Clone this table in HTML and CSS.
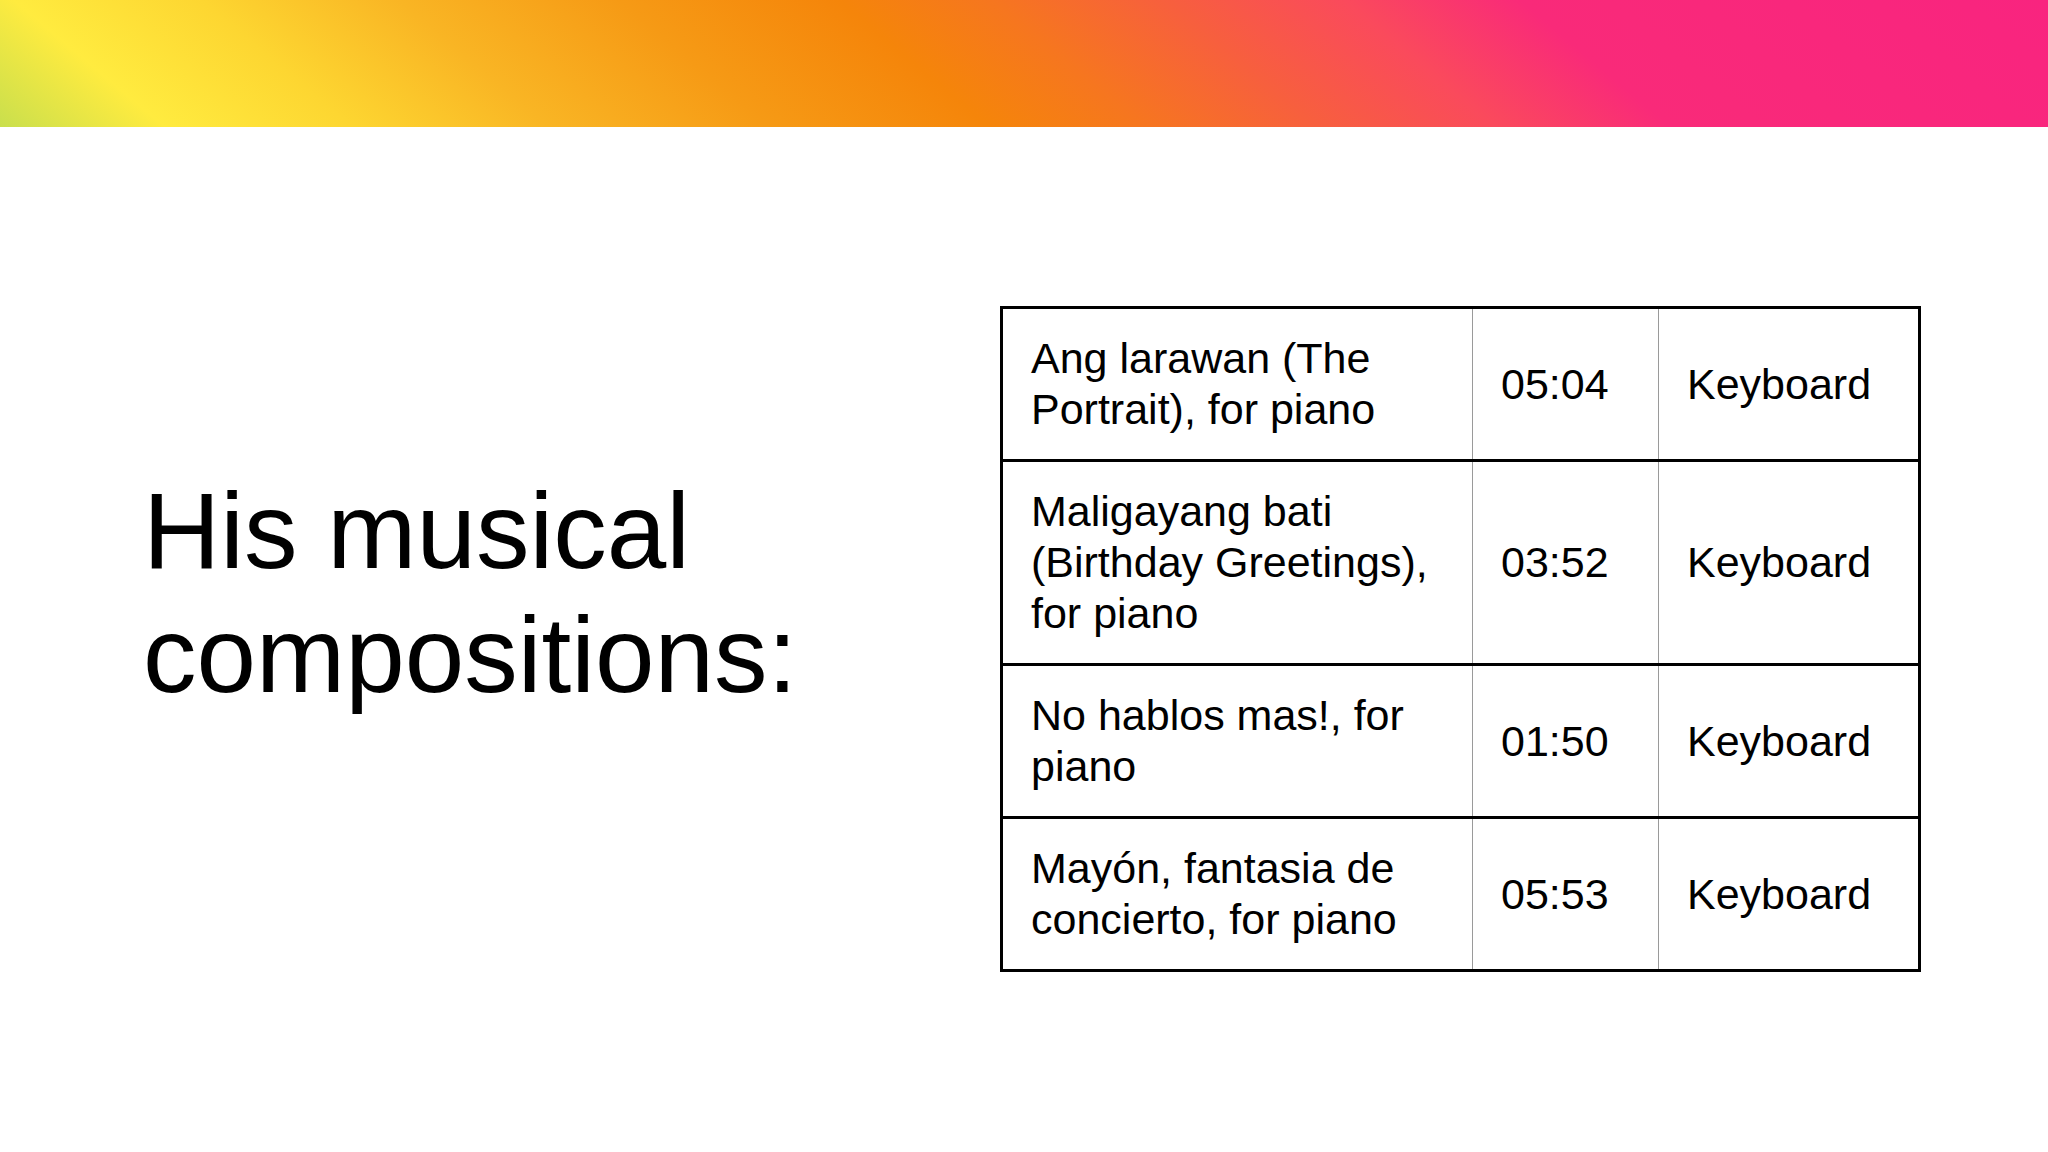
FILE: index.html
```html
<!DOCTYPE html>
<html lang="en">
<head>
<meta charset="utf-8">
<title>His musical compositions</title>
<link rel="stylesheet" href="styles.css">
</head>
<body>
<div class="slide">
  <div class="banner"></div>
  <div class="main">
    <h1 class="title">His musical compositions:</h1>
    <table class="works">
      <colgroup>
        <col class="c-name">
        <col class="c-time">
        <col class="c-inst">
      </colgroup>
      <tbody>
        <tr><td>Ang larawan (The Portrait), for piano</td><td>05:04</td><td>Keyboard</td></tr>
        <tr><td>Maligayang bati (Birthday Greetings), for piano</td><td>03:52</td><td>Keyboard</td></tr>
        <tr><td>No hablos mas!, for piano</td><td>01:50</td><td>Keyboard</td></tr>
        <tr><td>Mayón, fantasia de concierto, for piano</td><td>05:53</td><td>Keyboard</td></tr>
      </tbody>
    </table>
  </div>
</div>
</body>
</html>
```

FILE: styles.css
```css
html, body {
  margin: 0;
  padding: 0;
  background: #ffffff;
}

.slide {
  width: 2048px;
  height: 1152px;
  overflow: hidden;
  font-family: "Liberation Sans", Arial, sans-serif;
  color: #000000;
  background: #ffffff;
}

.banner {
  height: 127px;
  background: linear-gradient(40deg,
    #c9df4d 0%,
    #ffeb3f 7.5%,
    #fdd631 16%,
    #f9b524 25%,
    #f69a15 35%,
    #f5850a 45%,
    #f6761f 52%,
    #f75f3e 60%,
    #fa4a5c 68%,
    #f92a79 76%,
    #f9247f 100%);
}

.main {
  display: flex;
  align-items: flex-start;
  padding-left: 143px;
}

.title {
  width: 857px;
  margin: 342px 0 0 0;
  font-size: 107px;
  line-height: 124px;
  font-weight: normal;
  letter-spacing: 0;
}

.works {
  margin-top: 179px;
  width: 918px;
  table-layout: fixed;
  border-collapse: collapse;
  border: 3px solid #000000;
  font-size: 43px;
  line-height: 51px;
}

.c-name { width: 471px; }
.c-time { width: 186px; }
.c-inst { width: 261px; }

.works td {
  padding: 24px 28px;
  vertical-align: middle;
  text-align: left;
  border-top: 3px solid #000000;
  border-bottom: 3px solid #000000;
  border-left: 1px solid #9a9a9a;
  border-right: 1px solid #9a9a9a;
}

.works td:first-child {
  border-left: 3px solid #000000;
}

.works td:last-child {
  border-right: 3px solid #000000;
}
```
